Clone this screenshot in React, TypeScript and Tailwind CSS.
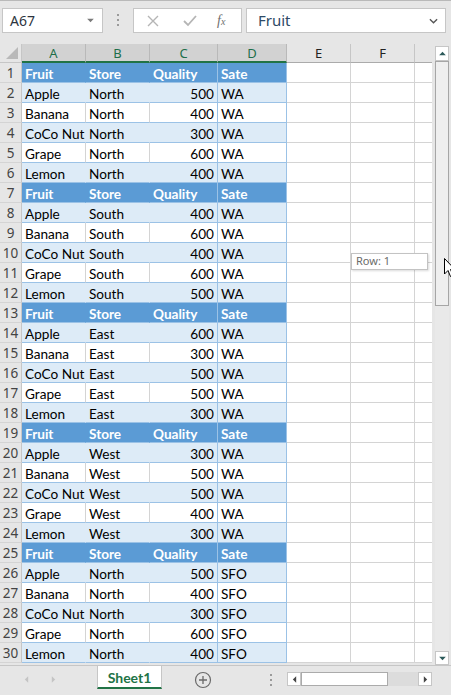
import React from 'react';

type Kind = 'head' | 'blue' | 'white';
type Row = { n: number; kind: Kind; cells: [string, string, string, string] };

const groups: { store: string; vals: number[]; st: string }[] = [
  { store: 'North', vals: [500, 400, 300, 600, 400], st: 'WA' },
  { store: 'South', vals: [400, 600, 400, 600, 500], st: 'WA' },
  { store: 'East', vals: [600, 300, 500, 500, 300], st: 'WA' },
  { store: 'West', vals: [300, 500, 500, 400, 300], st: 'WA' },
  { store: 'North', vals: [500, 400, 300, 600, 400], st: 'SFO' },
];
const fruits = ['Apple', 'Banana', 'CoCo Nut', 'Grape', 'Lemon'];

const rows: Row[] = [];
groups.forEach((g) => {
  rows.push({ n: rows.length + 1, kind: 'head', cells: ['Fruit', 'Store', 'Quality', 'Sate'] });
  fruits.forEach((f, i) => {
    rows.push({
      n: rows.length + 1,
      kind: i % 2 === 0 ? 'blue' : 'white',
      cells: [f, g.store, String(g.vals[i]), g.st],
    });
  });
});

const cols = 'grid grid-cols-[22px_64px_64px_68px_69px_64px_64px_17px]';
const cellFont = "font-['Lato',sans-serif] text-[13.6px] leading-none whitespace-nowrap";

function SheetRow({ r }: { r: Row }) {
  const fill =
    r.kind === 'head'
      ? 'bg-[#5b9bd5] text-white font-bold'
      : r.kind === 'blue'
        ? 'bg-[#ddebf7] text-black'
        : 'bg-white text-black';
  const sep =
    r.kind === 'head'
      ? 'border-r-[#5b9bd5]'
      : r.kind === 'blue'
        ? 'border-r-[#ddebf7]'
        : 'border-r-[#d4d4d4]';
  const base = `h-[20px] flex items-center pt-[4px] px-[3px] border-b border-b-[#9bc2e6] border-r ${fill} ${cellFont}`;
  return (
    <div className={`${cols} h-[20px]`}>
      <div className="h-[20px] flex items-center justify-center pt-[2px] bg-[#e6e6e6] border-r border-r-[#c6c6c6] border-b border-b-[#d4d4d4] text-[13.5px] text-[#444] font-['Noto_Sans',sans-serif]">
        {r.n}
      </div>
      <div className={`${base} ${sep} relative z-10`}>{r.cells[0]}</div>
      <div className={`${base} ${sep}`}>{r.cells[1]}</div>
      <div
        className={`${base} border-r-[#9bc2e6] ${r.kind === 'head' ? 'justify-start' : 'justify-end'}`}
      >
        {r.cells[2]}
      </div>
      <div className={`${base} border-r-[#9bc2e6]`}>{r.cells[3]}</div>
      <div className="h-[20px] bg-white border-r border-b border-[#d4d4d4]" />
      <div className="h-[20px] bg-white border-r border-b border-[#d4d4d4]" />
      <div className="h-[20px] bg-white border-b border-[#d4d4d4]" />
    </div>
  );
}

function Tri({ dir, className }: { dir: 'up' | 'down' | 'left' | 'right'; className: string }) {
  const d = {
    up: 'M0 5 L4 1 L8 5 Z',
    down: 'M0 1 L8 1 L4 5 Z',
    left: 'M5 0 L5 8 L1 4 Z',
    right: 'M1 0 L1 8 L5 4 Z',
  }[dir];
  const vb = dir === 'up' || dir === 'down' ? '0 0 8 6' : '0 0 6 8';
  const size = dir === 'up' || dir === 'down' ? 'w-[7px] h-[5px]' : 'w-[5px] h-[7px]';
  return (
    <svg viewBox={vb} className={`${size} ${className}`}>
      <path d={d} fill="currentColor" />
    </svg>
  );
}

function Dots({ className }: { className: string }) {
  return (
    <div className={`flex flex-col gap-[3px] ${className}`}>
      <span className="w-[2px] h-[2px] bg-[#9a9a9a]" />
      <span className="w-[2px] h-[2px] bg-[#9a9a9a]" />
      <span className="w-[2px] h-[2px] bg-[#9a9a9a]" />
    </div>
  );
}

export default function App() {
  const headerCell =
    "h-[19px] flex items-center justify-center pt-[2px] border-r font-['Noto_Sans',sans-serif] text-[13px]";
  return (
    <div className="relative w-[451px] h-[695px] overflow-hidden bg-[#e6e6e6] border-t border-[#b9b9b9] flex flex-col">
      {/* formula bar */}
      <div className="h-[43px] flex items-start pt-[7px]">
        <div className="ml-[2px] w-[101px] h-[25px] bg-white border border-[#c6c6c6] flex items-center pl-[7px] pr-[8px]">
          <span className="flex-1 font-['Noto_Sans',sans-serif] text-[14px] text-[#2d3440]">A67</span>
          <Tri dir="down" className="text-[#7a7a7a]" />
        </div>
        <Dots className="ml-[14px] mt-[6px]" />
        <div className="ml-[14px] w-[109px] h-[25px] bg-white border border-[#c6c6c6] flex items-center">
          <svg viewBox="0 0 12 12" className="ml-[13px] w-[12px] h-[12px]">
            <path d="M1 1 L11 11 M11 1 L1 11" stroke="#b5b5b5" strokeWidth="1.4" />
          </svg>
          <svg viewBox="0 0 14 12" className="ml-[24px] w-[14px] h-[12px]">
            <path d="M1 6 L5 10 L13 1" stroke="#b5b5b5" strokeWidth="1.8" fill="none" />
          </svg>
          <span className="ml-[20px] font-['Liberation_Serif',serif] italic text-[14px] text-[#6f6f6f] leading-none">
            f<span className="text-[10px]">x</span>
          </span>
        </div>
        <div className="ml-[4px] w-[200px] h-[25px] bg-white border border-[#c6c6c6] flex items-center pl-[11px] pr-[7px]">
          <span className="flex-1 font-['Noto_Sans',sans-serif] text-[15px] text-[#2e4a66]">Fruit</span>
          <svg viewBox="0 0 10 6" className="w-[9px] h-[6px]">
            <path d="M1 1 L5 5 L9 1" stroke="#555" strokeWidth="1.5" fill="none" />
          </svg>
        </div>
      </div>

      {/* sheet area */}
      <div className="flex flex-1">
        <div className="w-[432px] flex flex-col">
          <div className={`${cols} h-[19px]`}>
            <div className="h-[19px] relative bg-[#e6e6e6] border-r border-[#c6c6c6] border-b border-b-[#c6c6c6]">
              <svg viewBox="0 0 12 12" className="absolute right-[3px] bottom-[3px] w-[12px] h-[12px]">
                <path d="M12 0 L12 12 L0 12 Z" fill="#b9b9b9" />
              </svg>
            </div>
            {['A', 'B', 'C', 'D'].map((c) => (
              <div
                key={c}
                className={`${headerCell} bg-[#d2d2d2] border-r-[#b9b9b9] border-b-2 border-b-[#217346] text-[#1e6f4a]`}
              >
                {c}
              </div>
            ))}
            <div className={`${headerCell} bg-[#e6e6e6] border-r-[#c6c6c6] border-b border-b-[#ababab] text-[#222]`}>E</div>
            <div className={`${headerCell} bg-[#e6e6e6] border-r-[#c6c6c6] border-b border-b-[#ababab] text-[#222]`}>F</div>
            <div className="h-[19px] bg-[#e6e6e6] border-b border-b-[#ababab]" />
          </div>
          <div className="border-r border-[#ababab]">
            {rows.map((r) => (
              <SheetRow key={r.n} r={r} />
            ))}
          </div>
        </div>

        {/* vertical scrollbar */}
        <div className="ml-[3px] mt-[2px] w-[14px] h-[619px] flex flex-col">
          <div className="h-[15px] bg-white border border-[#c6c6c6] flex items-center justify-center">
            <Tri dir="up" className="text-[#2c5a5a]" />
          </div>
          <div className="h-[245px] bg-[#efefef] border border-[#a6a6a6]" />
          <div className="flex-1 bg-[#e9e9e9]" />
          <div className="h-[14px] bg-white border border-[#c6c6c6] flex items-center justify-center">
            <Tri dir="down" className="text-[#2c5a5a]" />
          </div>
        </div>
      </div>

      {/* tab bar */}
      <div className="h-[30px] flex items-start border-t border-[#c6c6c6]">
        <div className="mt-[10px] ml-[24px] flex items-center gap-[22px] text-[#c4c4c4]">
          <Tri dir="left" className="" />
          <Tri dir="right" className="" />
        </div>
        <div className="ml-[41px] w-[65px] h-[23px] bg-white border-x border-[#c6c6c6] border-b-2 border-b-[#217346] flex items-center justify-center pt-[1px] font-['Lato',sans-serif] font-bold text-[14px] text-[#217346]">
          Sheet1
        </div>
        <svg viewBox="0 0 18 18" className="ml-[32px] mt-[5px] w-[18px] h-[18px]">
          <circle cx="9" cy="9" r="7.5" stroke="#6a6a6a" strokeWidth="1.2" fill="none" />
          <path d="M9 5 V13 M5 9 H13" stroke="#6a6a6a" strokeWidth="1.3" />
        </svg>
        <Dots className="ml-[58px] mt-[8px]" />
        <div className="ml-[15px] mt-[6px] w-[145px] h-[14px] flex">
          <div className="w-[14px] h-[14px] bg-white border border-[#c6c6c6] flex items-center justify-center">
            <Tri dir="left" className="text-[#444]" />
          </div>
          <div className="w-[87px] h-[14px] bg-white border border-[#ababab]" />
          <div className="flex-1 bg-[#dcdcdc]" />
          <div className="w-[14px] h-[14px] bg-white border border-[#c6c6c6] flex items-center justify-center">
            <Tri dir="right" className="text-[#444]" />
          </div>
        </div>
      </div>

      {/* tooltip */}
      <div className="absolute left-[351px] top-[252px] w-[77px] h-[17px] bg-white border border-[#c3c3c3] shadow-[1px_1px_2px_rgba(0,0,0,0.15)] flex items-center pl-[4px] font-['Noto_Sans',sans-serif] text-[11px] text-[#6b6b6b]">
        Row: 1
      </div>

      {/* mouse pointer */}
      <svg viewBox="0 0 12 20" className="absolute left-[444px] top-[257px] w-[12px] h-[20px]">
        <path d="M0.5 0.5 L0.5 16 L4 12.5 L6.5 18.5 L9 17.5 L6.5 11.5 L11 11.5 Z" fill="white" stroke="black" strokeWidth="1" />
      </svg>
    </div>
  );
}
